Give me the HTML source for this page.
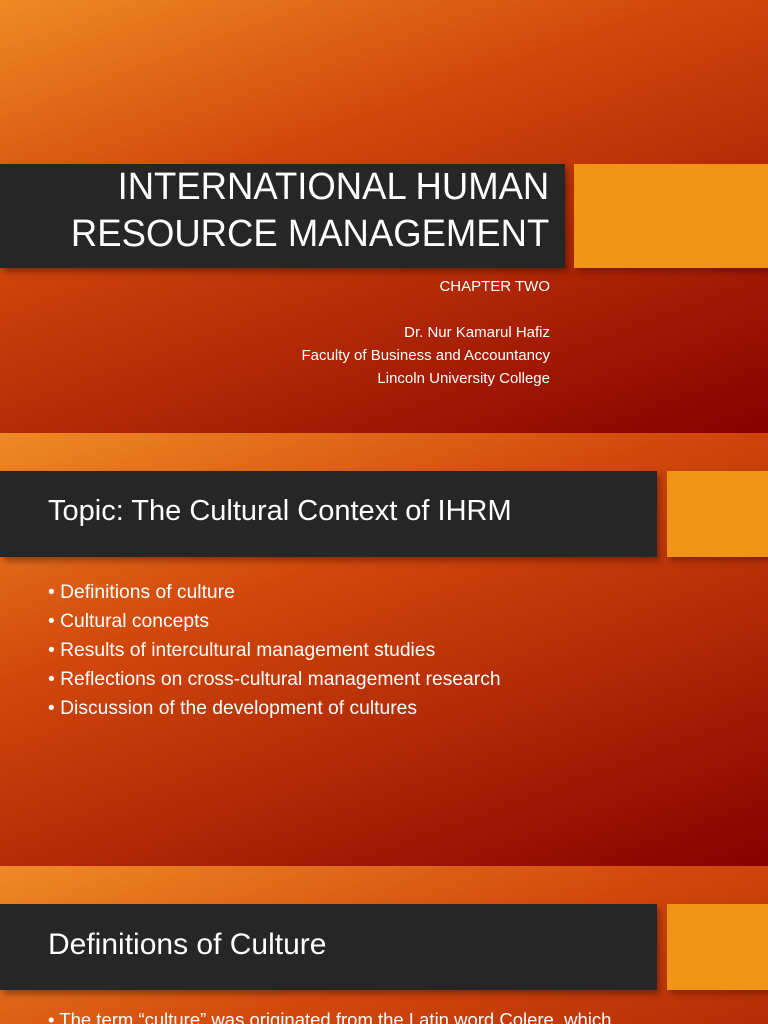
<!DOCTYPE html>
<html style="width:768px;height:1024px;overflow:hidden"><head><meta charset="utf-8"><style>
*{margin:0;padding:0;box-sizing:border-box}
body{width:768px;height:1024px;overflow:hidden;position:relative;background:#c33a08;font-family:"Liberation Sans","DejaVu Sans",sans-serif;color:#fff}
.s{position:absolute;left:0;width:768px;height:433px;background:linear-gradient(160deg,#ef8a25 0%,#d2480c 35%,#b02806 65%,#870000 100%);background-size:768px 433px;background-repeat:no-repeat;overflow:hidden}
.bar{position:absolute;left:0;background:#262626;box-shadow:3px 4px 6px rgba(0,0,0,.35)}
.ob{position:absolute;right:0;background:#f09418;box-shadow:3px 4px 6px rgba(0,0,0,.3)}
.t{position:absolute;white-space:nowrap}
</style></head><body>
<div class="s" style="top:0">
 <div class="bar" style="top:164px;width:565px;height:104px"></div>
 <div class="ob" style="top:164px;width:194px;height:104px"></div>
 <div class="t" style="right:219px;top:164px;font-size:38px;line-height:47px;text-align:right;transform:scaleX(.96);transform-origin:right">INTERNATIONAL HUMAN<br>RESOURCE MANAGEMENT</div>
 <div class="t" style="right:218px;top:275px;font-size:15px;text-align:right;line-height:23px">CHAPTER TWO<br><br>Dr. Nur Kamarul Hafiz<br>Faculty of Business and Accountancy<br>Lincoln University College</div>
</div>
<div class="s" style="top:433px">
 <div class="bar" style="top:38px;width:657px;height:86px"></div>
 <div class="ob" style="top:38px;width:101px;height:86px"></div>
 <div class="t" style="left:48px;top:62px;font-size:29px">Topic: The Cultural Context of IHRM</div>
 <div class="t" style="left:48px;top:145px;font-size:19.3px;line-height:29px">• Definitions of culture<br>• Cultural concepts<br>• Results of intercultural management studies<br>• Reflections on cross-cultural management research<br>• Discussion of the development of cultures</div>
</div>
<div class="s" style="top:866px;height:158px">
 <div class="bar" style="top:38px;width:657px;height:86px"></div>
 <div class="ob" style="top:38px;width:101px;height:86px"></div>
 <div class="t" style="left:48px;top:62px;font-size:30px">Definitions of Culture</div>
 <div class="t" style="left:48px;top:143px;font-size:18.5px">• The term “culture” was originated from the Latin word Colere, which</div>
</div>
</body></html>
